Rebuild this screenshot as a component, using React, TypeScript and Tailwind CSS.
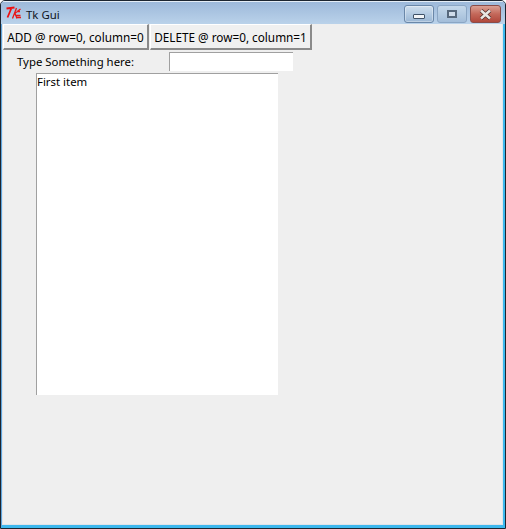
export default function App() {
  return (
    <div className="w-[506px] h-[529px] bg-[#b9d1ea] border border-[#1c2530] rounded-t-[5px] overflow-hidden flex flex-col font-['Noto_Sans',sans-serif] text-[11.4px] leading-[16px] text-black">
      <div className="h-[23px] shrink-0 flex items-start bg-gradient-to-b from-[#9db9da] to-[#bad2ea] border-t border-[#e4edf6] pl-[5px]">
        <svg width="16" height="14" viewBox="0 0 16 14" className="mt-[4px] shrink-0">
          <path d="M0.5 2.5L8.5 1.5M5.5 2L1.5 11.5" stroke="#ee0f0f" strokeWidth="1.8" fill="none" />
          <path d="M6.5 12.5L10.5 2M8 8L14.5 3M9 7.5L11 12.5M10.5 5.5H14M9.5 9.5H14.5M11 11.5H15" stroke="#e81818" strokeWidth="1.3" fill="none" />
        </svg>
        <span className="ml-[4px] mt-[5px] text-[#10141c]">Tk Gui</span>
        <div className="ml-auto flex items-start gap-[3px] mr-[4px] mt-[3px]">
          <div className="w-[30px] h-[18px] rounded-[3px] border border-[#6a87a8] bg-gradient-to-b from-[#cfdeed] via-[#b4cbe2] to-[#9ab6d4] flex items-center justify-center shadow-[inset_0_0_0_1px_rgba(255,255,255,0.35)]">
            <div className="w-[12px] h-[5px] mt-[4px] rounded-[1px] bg-[#f2f5f8] border border-[#3f5268]" />
          </div>
          <div className="w-[30px] h-[18px] rounded-[3px] border border-[#8ba6c4] bg-gradient-to-b from-[#c4d7ea] via-[#b4cbe2] to-[#a3bdd9] flex items-center justify-center">
            <div className="w-[10px] h-[8px] border-2 border-[#56687c] bg-[#cfdcea]" />
          </div>
          <div className="w-[31px] h-[18px] rounded-[3px] border border-[#8a4c48] bg-gradient-to-b from-[#d9a094] via-[#c4685a] to-[#b0473b] flex items-center justify-center">
            <svg width="15" height="11" viewBox="0 0 15 11">
              <path d="M3 1.5L12 9.5M12 1.5L3 9.5" stroke="#4a2a28" strokeWidth="4" fill="none" />
              <path d="M3 1.5L12 9.5M12 1.5L3 9.5" stroke="#e9e6e4" strokeWidth="2.6" fill="none" />
            </svg>
          </div>
        </div>
      </div>
      <div className="flex-1 min-h-0 bg-[#efefef] border-l border-r-2 border-b-[3px] border-l-[#5fa6de] border-r-[#3cb8ee] border-b-[#3cb8ee]">
        <div className="h-full border-l border-r border-b border-[#dfe4ea]">
          <div className="flex gap-[1px] h-[26px]">
            <button className="w-[146px] h-[26px] bg-[#f0f0f0] text-[11.75px] border-t border-l border-t-white border-l-white border-r-2 border-b-2 border-r-[#8a8a8a] border-b-[#8a8a8a] text-center">ADD @ row=0, column=0</button>
            <button className="w-[162px] h-[26px] bg-[#f0f0f0] text-[11.75px] border-t border-l border-t-white border-l-white border-r-2 border-b-2 border-r-[#8a8a8a] border-b-[#8a8a8a] text-center">DELETE @ row=0, column=1</button>
          </div>
          <div className="flex items-start h-[23px] pt-[2px]">
            <span className="ml-[14px] mt-[2px] w-[152px]">Type Something here:</span>
            <div className="w-[124px] h-[19px] bg-white border-t border-l border-[#a0a0a0]" />
          </div>
          <div className="ml-[33px] w-[242px] h-[322px] bg-white border-t border-l border-[#a0a0a0]">
            First item
          </div>
        </div>
      </div>
    </div>
  );
}
